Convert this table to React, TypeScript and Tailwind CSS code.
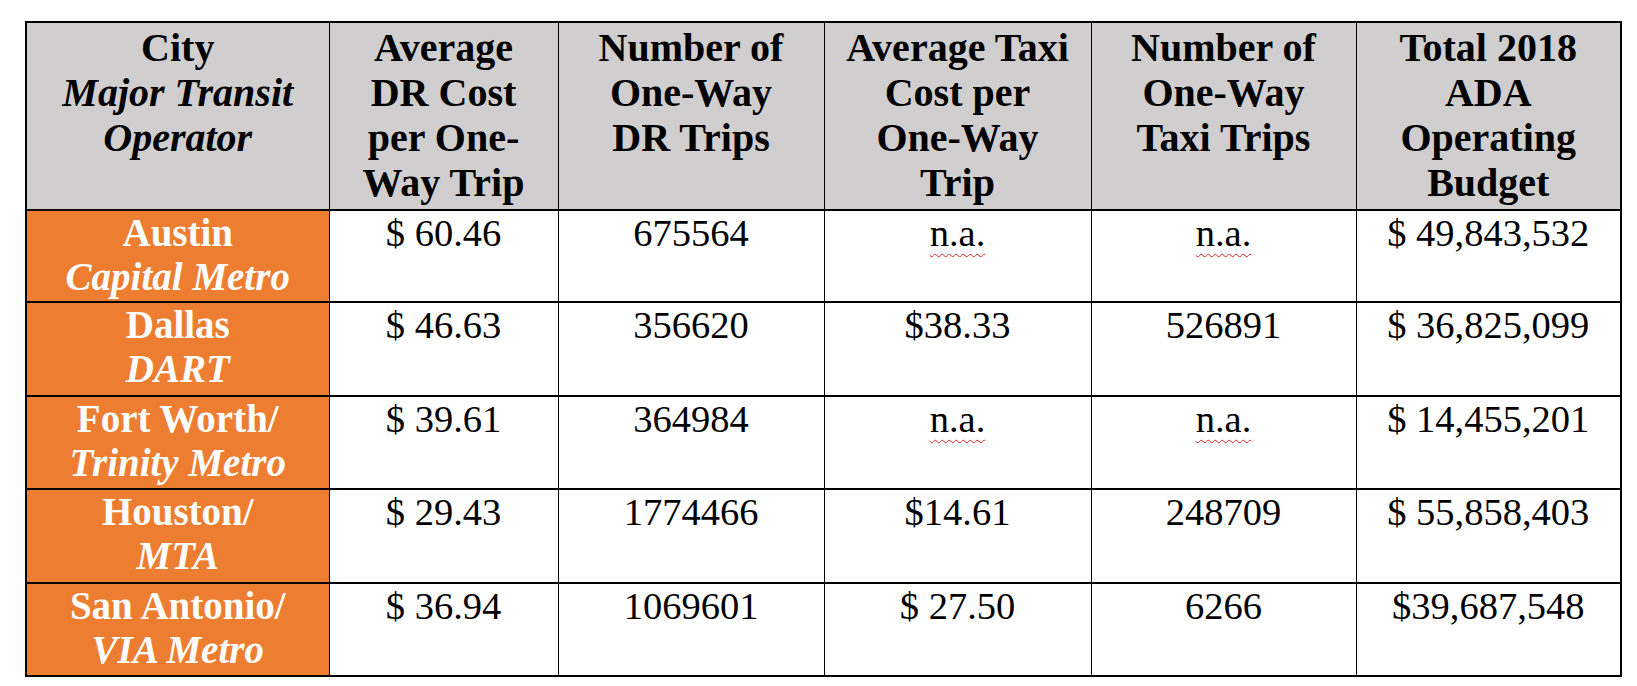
const headers: { lines: string[]; italicFrom?: number }[] = [
  { lines: ['City', 'Major Transit', 'Operator'], italicFrom: 1 },
  { lines: ['Average', 'DR Cost', 'per One-', 'Way Trip'] },
  { lines: ['Number of', 'One-Way', 'DR Trips'] },
  { lines: ['Average Taxi', 'Cost per', 'One-Way', 'Trip'] },
  { lines: ['Number of', 'One-Way', 'Taxi Trips'] },
  { lines: ['Total 2018', 'ADA', 'Operating', 'Budget'] },
]

const rows = [
  { city: 'Austin', op: 'Capital Metro', h: 'h-[92px]', cells: ['$ 60.46', '675564', 'n.a.', 'n.a.', '$ 49,843,532'] },
  { city: 'Dallas', op: 'DART', h: 'h-[94px]', cells: ['$ 46.63', '356620', '$38.33', '526891', '$ 36,825,099'] },
  { city: 'Fort Worth/', op: 'Trinity Metro', h: 'h-[93px]', cells: ['$ 39.61', '364984', 'n.a.', 'n.a.', '$ 14,455,201'] },
  { city: 'Houston/', op: 'MTA', h: 'h-[94px]', cells: ['$ 29.43', '1774466', '$14.61', '248709', '$ 55,858,403'] },
  { city: 'San Antonio/', op: 'VIA Metro', h: 'h-[93px]', cells: ['$ 36.94', '1069601', '$ 27.50', '6266', '$39,687,548'] },
]

const widths = ['w-[303px]', 'w-[229px]', 'w-[266px]', 'w-[267px]', 'w-[265px]', 'w-[265px]']

export default function App() {
  return (
    <div className="w-[1637px] h-[686px] bg-white pt-[21px] pl-[25px] font-['Liberation_Serif','Times_New_Roman',serif] text-black">
      <table className="table-fixed border-collapse border-2 border-black w-[1597px]">
        <colgroup>
          {widths.map((w, i) => (
            <col key={i} className={w} />
          ))}
        </colgroup>
        <thead>
          <tr className="h-[188px]">
            {headers.map((h, i) => (
              <th
                key={i}
                className="bg-[#d0cece] border-x border-b-2 border-black align-top text-center font-bold text-[40px] leading-[45px] pt-[2px] px-0 whitespace-nowrap"
              >
                {h.lines.map((l, j) => (
                  <div key={j} className={h.italicFrom !== undefined && j >= h.italicFrom ? 'italic' : ''}>
                    {l}
                  </div>
                ))}
              </th>
            ))}
          </tr>
        </thead>
        <tbody>
          {rows.map((r) => (
            <tr key={r.city} className={r.h}>
              <td className="bg-[#ed7d31] text-white border-x border-y-2 border-black align-top text-center font-bold text-[39px] leading-[44px] whitespace-nowrap">
                <div>{r.city}</div>
                <div className="italic">{r.op}</div>
              </td>
              {r.cells.map((c, i) => (
                <td
                  key={i}
                  className="border-x border-y-2 border-black align-top text-center text-[38.5px] leading-[44px] whitespace-nowrap"
                >
                  {c === 'n.a.' ? (
                    <span className="underline decoration-wavy decoration-[#e02424] decoration-1 underline-offset-[7px]">
                      n.a.
                    </span>
                  ) : (
                    c
                  )}
                </td>
              ))}
            </tr>
          ))}
        </tbody>
      </table>
    </div>
  )
}
